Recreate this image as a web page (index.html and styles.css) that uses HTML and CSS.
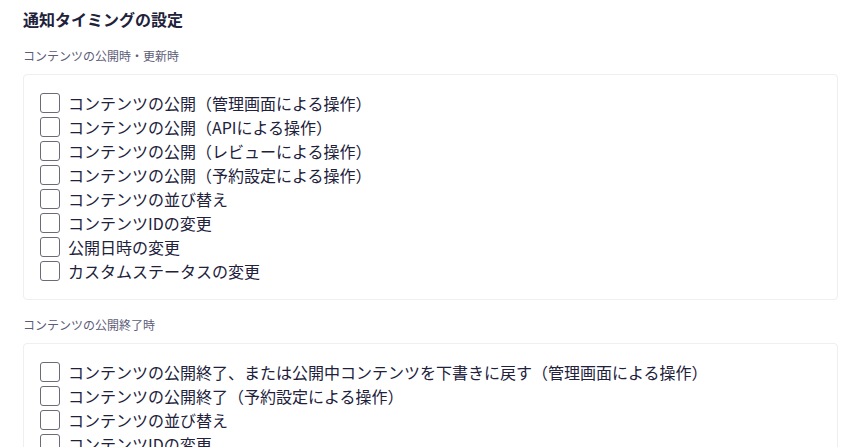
FILE: index.html
```html
<!DOCTYPE html>
<html lang="ja">
<head>
    <meta charset="UTF-8">
    <title>通知タイミングの設定</title>
    <link rel="stylesheet" href="styles.css">
</head>
<body>
    <div class="page">
        <h2 class="title">通知タイミングの設定</h2>

        <p class="label">コンテンツの公開時・更新時</p>
        <div class="card">
            <label class="item"><input type="checkbox"><span>コンテンツの公開（管理画面による操作）</span></label>
            <label class="item"><input type="checkbox"><span>コンテンツの公開（APIによる操作）</span></label>
            <label class="item"><input type="checkbox"><span>コンテンツの公開（レビューによる操作）</span></label>
            <label class="item"><input type="checkbox"><span>コンテンツの公開（予約設定による操作）</span></label>
            <label class="item"><input type="checkbox"><span>コンテンツの並び替え</span></label>
            <label class="item"><input type="checkbox"><span>コンテンツIDの変更</span></label>
            <label class="item"><input type="checkbox"><span>公開日時の変更</span></label>
            <label class="item"><input type="checkbox"><span>カスタムステータスの変更</span></label>
        </div>

        <p class="label">コンテンツの公開終了時</p>
        <div class="card">
            <label class="item"><input type="checkbox"><span>コンテンツの公開終了、または公開中コンテンツを下書きに戻す（管理画面による操作）</span></label>
            <label class="item"><input type="checkbox"><span>コンテンツの公開終了（予約設定による操作）</span></label>
            <label class="item"><input type="checkbox"><span>コンテンツの並び替え</span></label>
            <label class="item"><input type="checkbox"><span>コンテンツIDの変更</span></label>
        </div>
    </div>
</body>
</html>
```

FILE: styles.css
```css
*{
    margin: 0;
    padding: 0;
    box-sizing: border-box;
}
body{
    background: #fff;
    color: #21213b;
    font-family: "Noto Sans CJK JP", "Noto Sans", sans-serif;
}
.page{
    padding: 7px 18px 0 23px;
}
.title{
    font-size: 16px;
    line-height: 24px;
    font-weight: bold;
    margin-bottom: 16px;
}
.label{
    font-size: 12px;
    line-height: 18px;
    color: #5c5c78;
    margin-bottom: 9px;
}
.card{
    border: 1px solid #eeeef3;
    border-radius: 4px;
    padding: 16px;
    margin-bottom: 16px;
}
.item{
    display: flex;
    align-items: center;
    height: 24px;
    font-size: 16px;
    line-height: 24px;
    cursor: pointer;
}
.item input{
    appearance: none;
    -webkit-appearance: none;
    width: 20px;
    height: 20px;
    border: 1px solid #6a6a78;
    border-radius: 3px;
    background: #fff;
    margin-right: 8px;
    flex-shrink: 0;
}
```
